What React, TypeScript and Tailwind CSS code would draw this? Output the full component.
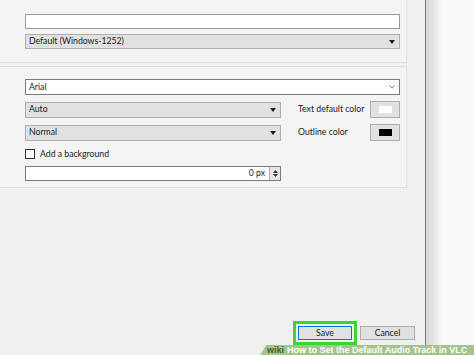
import React from "react";

function Tri({ className = "" }: { className?: string }) {
  return (
    <svg width="6" height="4" viewBox="0 0 6 4" className={className}>
      <path d="M0 0 H6 L3 4 Z" fill="#1a1a1a" />
    </svg>
  );
}

function Select({ label, w }: { label: string; w: string }) {
  return (
    <div className={`${w} h-[16px] border border-[#adadad] bg-[#e1e1e1] flex items-center justify-between pl-[3px] pr-[4px]`}>
      <span className="leading-none">{label}</span>
      <Tri />
    </div>
  );
}

function ColorBtn({ swatch }: { swatch: string }) {
  return (
    <div className="w-[30px] h-[17px] border border-[#adadad] bg-[#e1e1e1] flex items-center justify-center">
      <div className={`w-[13px] h-[7px] ${swatch}`} />
    </div>
  );
}

export default function App() {
  return (
    <div className="relative w-[474px] h-[355px] overflow-hidden flex bg-[#f9f9f9] text-[8.7px] text-[#1a1a1a] font-['Lato','Noto_Sans',sans-serif]">
      <div className="w-[426px] h-full bg-[#f0f0f0] border-r border-[#7c7c7c] flex flex-col">
        <div className="w-[407px] bg-[#f4f4f4] border-b border-r border-[#dedede] pl-[25px] pr-[6px] pt-[14px] pb-[13px] flex flex-col gap-[5px]">
          <div className="h-[15px] border border-[#9a9a9a] bg-white" />
          <div className="h-[15px] border border-[#adadad] bg-[#e1e1e1] flex items-center justify-between pl-[3px] pr-[4px]">
            <span className="leading-none">Default (Windows-1252)</span>
            <Tri />
          </div>
        </div>
        <div className="mt-[3px] w-[407px] bg-[#f4f4f4] border-y border-r border-[#dedede] pl-[25px] pr-[6px] pt-[12px] pb-[6px] flex flex-col">
          <div className="h-[16px] border border-[#7a7a7a] bg-white flex items-center justify-between pl-[3px] pr-[4px]">
            <span className="leading-none">Arial</span>
            <svg width="6" height="4" viewBox="0 0 6 4">
              <path d="M0.5 0.5 L3 3.2 L5.5 0.5" fill="none" stroke="#555" strokeWidth="0.8" />
            </svg>
          </div>
          <div className="mt-[6px] flex items-center">
            <Select label="Auto" w="w-[256px]" />
            <span className="ml-[17px] leading-none whitespace-nowrap">Text default color</span>
            <div className="ml-auto">
              <ColorBtn swatch="bg-white" />
            </div>
          </div>
          <div className="mt-[6px] flex items-center">
            <Select label="Normal" w="w-[256px]" />
            <span className="ml-[17px] leading-none whitespace-nowrap">Outline color</span>
            <div className="ml-auto">
              <ColorBtn swatch="bg-black" />
            </div>
          </div>
          <div className="mt-[8px] flex items-center gap-[5px]">
            <div className="w-[10px] h-[10px] border border-[#333] bg-white" />
            <span className="leading-none">Add a background</span>
          </div>
          <div className="mt-[7px] w-[256px] h-[15px] border border-[#7a7a7a] bg-white flex items-center justify-end">
            <span className="leading-none mr-[4px]">0 px</span>
            <div className="w-[11px] h-full border-l border-[#adadad] bg-[#e6e6e6] flex flex-col items-center justify-center gap-[1px]">
              <svg width="5" height="3" viewBox="0 0 5 3">
                <path d="M0 3 H5 L2.5 0 Z" fill="#333" />
              </svg>
              <svg width="5" height="3" viewBox="0 0 5 3">
                <path d="M0 0 H5 L2.5 3 Z" fill="#333" />
              </svg>
            </div>
          </div>
        </div>
        <div className="flex-1" />
        <div className="flex items-center justify-end pr-[10px] pb-[10px] gap-[3px]">
          <div className="border-[3px] border-[#3bd62b] p-[2px]">
            <div className="w-[54px] h-[14px] border border-[#0078d7] bg-[#e1e1e1] flex items-center justify-center leading-none">
              Save
            </div>
          </div>
          <div className="w-[55px] h-[14px] border border-[#adadad] bg-[#e1e1e1] flex items-center justify-center leading-none">
            Cancel
          </div>
        </div>
      </div>
      <div className="w-[16px] h-full bg-gradient-to-r from-[#d4d4d4] to-[#f9f9f9]" />
      <div className="absolute bottom-0 right-0 w-[214px] h-[10px] bg-[#a3c48c] [clip-path:polygon(3%_0,100%_0,100%_100%,0_100%)] flex items-center pl-[7px] font-['Liberation_Sans',Arial,sans-serif] font-bold text-[9px] leading-none">
        <span className="text-[#4d5a42]">wiki</span>
        <span className="text-white ml-[3px]">How to Set the Default Audio Track in VLC</span>
      </div>
    </div>
  );
}
